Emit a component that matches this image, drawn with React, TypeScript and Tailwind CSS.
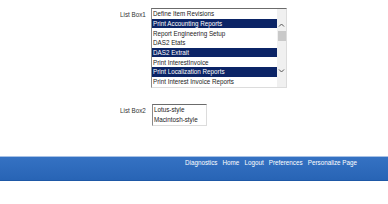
import React from "react";

const items = [
  { t: "Define Item Revisions", s: false },
  { t: "Print Accounting Reports", s: true },
  { t: "Report Engineering Setup", s: false },
  { t: "DAS2 Etats", s: false },
  { t: "DAS2 Extrait", s: true },
  { t: "Print InterestInvoice", s: false },
  { t: "Print Localization Reports", s: true },
  { t: "Print Interest Invoice Reports", s: false },
];

const font = { fontFamily: '"Liberation Sans", Arial, sans-serif' };

function N({ children }: { children: React.ReactNode }) {
  return <span className="inline-block whitespace-nowrap origin-left scale-x-[0.85]">{children}</span>;
}

export default function App() {
  return (
    <div className="w-[388px] h-[204px] bg-white text-[7.4px] leading-none" style={font}>
      <div className="flex pt-[8px]">
        <div className="w-[151px] pl-[120px] pt-[3px] text-[#333]">
          <N>List Box1</N>
        </div>
        <div className="flex w-[136px] h-[80px] border border-t-[#6b6b6b] border-l-[#8a8a8a] border-r-[#dcdcdc] border-b-[#dcdcdc] bg-white">
          <div className="flex-1 flex flex-col">
            {items.map((it) => (
              <div
                key={it.t}
                className={
                  "h-[9.7px] flex items-center pl-[1px] overflow-hidden " +
                  (it.s ? "bg-[#0b2466] text-white" : "text-[#222]")
                }
              >
                <N>{it.t}</N>
              </div>
            ))}
          </div>
          <div className="w-[9px] bg-[#f0f0f0] flex flex-col items-center">
            <svg width="7" height="6" viewBox="0 0 7 6" className="mt-[13px]">
              <path d="M1 4.5 L3.5 2 L6 4.5" fill="none" stroke="#555" strokeWidth="1" />
            </svg>
            <div className="mt-[3px] w-[8px] h-[10px] bg-[#c9c9c9]" />
            <svg width="7" height="6" viewBox="0 0 7 6" className="mt-[27px]">
              <path d="M1 1.5 L3.5 4 L6 1.5" fill="none" stroke="#555" strokeWidth="1" />
            </svg>
          </div>
        </div>
      </div>
      <div className="flex mt-[16px]">
        <div className="w-[152px] pl-[120px] pt-[3px] text-[#333]">
          <N>List Box2</N>
        </div>
        <div className="w-[55px] h-[22px] border border-t-[#6b6b6b] border-l-[#8a8a8a] border-r-[#dcdcdc] border-b-[#dcdcdc] bg-white flex flex-col">
          <div className="h-[10px] flex items-center pl-[1px] text-[#222]">
            <N>Lotus-style</N>
          </div>
          <div className="h-[10px] flex items-center pl-[1px] text-[#222]">
            <N>Macintosh-style</N>
          </div>
        </div>
      </div>
      <div className="mt-[30px] h-[25px] border-t border-t-[#a8c2e6] border-b border-b-[#1e58a6] bg-gradient-to-b from-[#3572c3] to-[#2864b5] pl-[185px] pt-[2px] text-white">
        <div className="flex gap-[6px] origin-left scale-x-[0.85] whitespace-nowrap">
          <span>Diagnostics</span>
          <span>Home</span>
          <span>Logout</span>
          <span>Preferences</span>
          <span>Personalize Page</span>
        </div>
      </div>
    </div>
  );
}
